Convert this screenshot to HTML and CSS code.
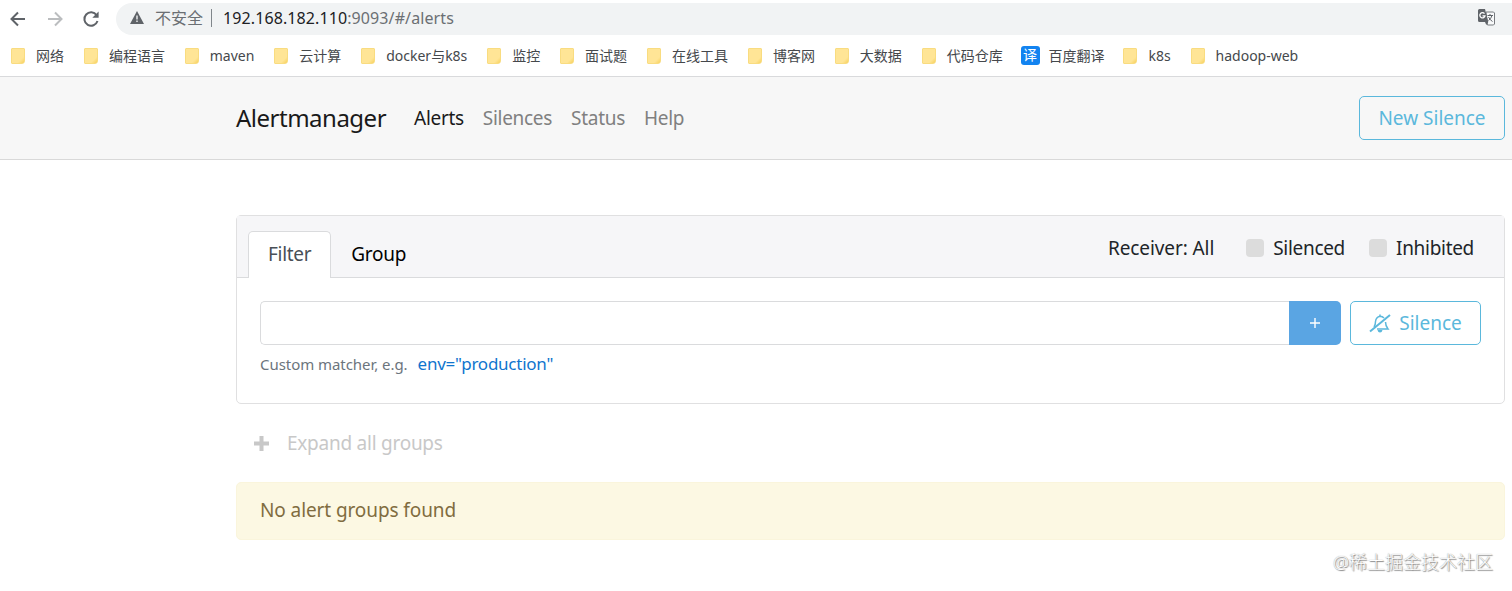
FILE: index.html
```
<!DOCTYPE html>
<html lang="en">
<head>
  <meta charset="UTF-8">
  <title>Alertmanager</title>
  <link rel="stylesheet" href="styles.css">
</head>
<body>

<div class="toolbar">
  <svg class="tool-icon back" width="18" height="18" viewBox="0 0 18 18"><path d="M16 9H3M9 2.5L2.5 9L9 15.5"/></svg>
  <svg class="tool-icon forward" width="18" height="18" viewBox="0 0 18 18"><path d="M2 9h13M9 2.5L15.5 9L9 15.5"/></svg>
  <svg class="tool-icon reload" width="18" height="18" viewBox="0 0 18 18"><path d="M14.6 5.2A6.7 6.7 0 1 0 15.5 11"/><path class="solid" d="M16.6 1.5v6.3h-6.3z"/></svg>
  <div class="address">
    <svg class="warn" width="14" height="13" viewBox="0 0 14 13"><path fill="#5f6368" d="M7 0l7 13H0z"/><path fill="#f1f3f4" d="M6.3 4.5h1.4v4H6.3zM6.3 9.6h1.4V11H6.3z"/></svg>
    <span class="unsafe">不安全</span>
    <span class="divider"></span>
    <span class="url"><b>192.168.182.110</b>:9093/#/alerts</span>
    <svg class="translate" width="17" height="17" viewBox="0 0 17 17">
      <path fill="#f8f9fa" stroke="#777a7e" d="M8 3h7.5l1 1v11l-1 1H9.5z"/>
      <path fill="#5f6368" d="M1.5 0H7l3.3 13H1.5Q0 13 0 11.5V1.5Q0 0 1.5 0zM7 13h3.3l-2 3z"/>
      <path fill="none" stroke="#fff" stroke-width="1.3" d="M6.5 4.6A2.6 2.6 0 1 0 7 6.8H4.5"/>
      <path fill="none" stroke="#5f6368" d="M9.5 6.5H15M12 5v1.5M14 6.5Q13 10 10.5 11.5M10.5 8Q12 11 14.5 12.5"/>
    </svg>
  </div>
</div>

<div class="bookmarks">
  <span class="bookmark"><i class="folder"></i>网络</span>
  <span class="bookmark"><i class="folder"></i>编程语言</span>
  <span class="bookmark"><i class="folder"></i>maven</span>
  <span class="bookmark"><i class="folder"></i>云计算</span>
  <span class="bookmark"><i class="folder"></i>docker与k8s</span>
  <span class="bookmark"><i class="folder"></i>监控</span>
  <span class="bookmark"><i class="folder"></i>面试题</span>
  <span class="bookmark"><i class="folder"></i>在线工具</span>
  <span class="bookmark"><i class="folder"></i>博客网</span>
  <span class="bookmark"><i class="folder"></i>大数据</span>
  <span class="bookmark"><i class="folder"></i>代码仓库</span>
  <span class="bookmark site"><i class="fanyi">译</i>百度翻译</span>
  <span class="bookmark"><i class="folder"></i>k8s</span>
  <span class="bookmark"><i class="folder"></i>hadoop-web</span>
</div>

<header class="navbar">
  <a class="brand">Alertmanager</a>
  <nav>
    <a class="active">Alerts</a>
    <a>Silences</a>
    <a>Status</a>
    <a>Help</a>
  </nav>
  <button class="btn new-silence">New Silence</button>
</header>

<main class="container">
  <div class="card">
    <div class="card-header">
      <div class="tabs">
        <a class="tab active">Filter</a>
        <a class="tab">Group</a>
      </div>
      <div class="options">
        <span class="receiver">Receiver: All</span>
        <label><i class="check"></i>Silenced</label>
        <label><i class="check"></i>Inhibited</label>
      </div>
    </div>
    <div class="card-body">
      <div class="filter-row">
        <input type="text" class="matcher">
        <button class="add"><svg width="10" height="10" viewBox="0 0 10 10"><path stroke="#fff" stroke-width="1.4" d="M5 0v10M0 5h10"/></svg></button>
        <button class="btn silence">
          <svg width="22" height="20" viewBox="0 0 22 20"><path d="M5 14Q6.5 12 6.5 8.500Q7 4 11 3.200Q13.500 3.200 15 5M16.500 9Q16.500 13 19 16H8M11 3V1.500"/><path class="slash" d="M1 18.500L21 2"/><path class="clapper" d="M8.500 17h5Q13 19.500 11 19.500T8.500 17z"/></svg>
          Silence
        </button>
      </div>
      <div class="hint"><span>Custom matcher, e.g.</span><a>env="production"</a></div>
    </div>
  </div>

  <div class="expand">
    <svg width="15" height="15" viewBox="0 0 15 15"><path stroke="#c8c8c8" stroke-width="4" d="M7.5 0v15M0 7.5h15"/></svg>
    <span>Expand all groups</span>
  </div>

  <div class="alert">No alert groups found</div>
</main>

<div class="watermark">@稀土掘金技术社区</div>

</body>
</html>
```

FILE: styles.css
```
* {
  box-sizing: border-box;
}

body {
  font-family: "Noto Sans", "Noto Sans CJK SC", sans-serif;
  font-size: 19px;
  line-height: 28px;
  margin: 0;
  color: #212529;
  background: #fff;
  overflow: hidden;
}

/* browser bars */
.toolbar {
  height: 37px;
  padding: 3px 0 3px 9px;
  display: flex;
  align-items: center;
}

.tool-icon {
  margin-right: 19px;
  fill: none;
  stroke: #5f6368;
  stroke-width: 2;
}

.tool-icon.forward {
  margin-right: 18px;
  stroke: #bbbdbf;
}

.tool-icon.reload {
  margin-right: 16px;
}

.solid {
  fill: #5f6368;
  stroke: none;
}

.address {
  flex: 1;
  height: 32px;
  padding: 0 17px 2px 14px;
  display: flex;
  align-items: center;
  background: #f1f3f4;
  border-radius: 16px 0 0 16px;
  color: #6b6f73;
  font-size: 16px;
}

.unsafe {
  margin-left: 11px;
}

.divider {
  width: 1px;
  height: 18px;
  margin: 0 11px 0 8px;
  background: #80868b;
}

.url {
  letter-spacing: 0.1px;
}

.url b {
  font-weight: normal;
  color: #202124;
}

.translate {
  margin-left: auto;
}

.bookmarks {
  height: 40px;
  padding: 0 0 2px 11px;
  display: flex;
  align-items: center;
  gap: 19.9px;
  border-bottom: 1px solid #d9dadc;
  font-size: 14px;
  color: #45484c;
  white-space: nowrap;
}

.bookmark {
  display: flex;
  align-items: center;
  gap: 11px;
}

.folder {
  width: 14px;
  height: 16px;
  background: linear-gradient(135deg, #ffe596 75%, #f7d15c);
  border: 1px solid #f9dc80;
  border-radius: 1px 1px 3px 1px;
}

.bookmark.site {
  gap: 9px;
  margin: 0 -1px 0 -2px;
}

.fanyi {
  width: 19px;
  height: 19px;
  background: #1283f0;
  border-radius: 3px;
  color: #fff;
  font-size: 14px;
  font-style: normal;
  line-height: 18px;
  text-align: center;
}

/* page */
.navbar {
  height: 83px;
  padding: 0 7px 0 236px;
  display: flex;
  align-items: center;
  background: #f7f7f7;
  border-bottom: 1px solid #d9d9d9;
}

.brand {
  font-size: 24px;
  letter-spacing: -0.5px;
  color: #1a1a1a;
}

nav {
  display: flex;
  gap: 19px;
  margin-left: 28px;
  letter-spacing: -0.3px;
  color: #808080;
}

nav .active {
  color: #1a1a1a;
}

.btn {
  height: 44px;
  border: 1px solid #5bb8dc;
  border-radius: 5px;
  background: transparent;
  color: #5bb8dc;
  font: inherit;
  padding: 0;
}

.new-silence {
  width: 146px;
  margin-left: auto;
}

.container {
  padding: 55px 7px 0 236px;
}

.card {
  height: 189px;
  border: 1px solid #e0e0e1;
  border-radius: 5px;
}

.card-header {
  height: 62px;
  padding: 15px 30px 0 11px;
  display: flex;
  justify-content: space-between;
  background: #f6f6f8;
  border-bottom: 1px solid #dadbdd;
  letter-spacing: -0.3px;
}

.tabs {
  display: flex;
}

.tab {
  height: 47px;
  padding: 8px 19px 0;
  border: 1px solid transparent;
  border-bottom: 0;
  border-radius: 5px 5px 0 0;
  color: #000;
}

.tab.active {
  background: #fff;
  border-color: #dadbdd;
  color: #495057;
}

.options {
  display: flex;
  padding-top: 3px;
}

.options label {
  display: flex;
  align-items: center;
  height: 28px;
}

.receiver {
  margin-right: 32px;
  letter-spacing: -0.1px;
}

.options label + label {
  margin-left: 24px;
}

.check {
  width: 18px;
  height: 18px;
  margin-right: 9px;
  background: #dcdcdc;
  border-radius: 4px;
}

.card-body {
  padding: 23px;
}

.filter-row {
  display: flex;
}

.matcher {
  flex: 1;
  height: 44px;
  border: 1px solid #dadbdd;
  border-right: 0;
  border-radius: 5px 0 0 5px;
}

.add {
  width: 52px;
  height: 44px;
  padding: 0;
  border: 0;
  border-radius: 0 5px 5px 0;
  background: #5aa5e3;
}

.silence {
  width: 131px;
  margin-left: 9px;
  display: flex;
  align-items: center;
  justify-content: center;
  gap: 8px;
}

.silence svg {
  fill: none;
  stroke: #5bb8dc;
  stroke-width: 1.5;
}

.silence .slash {
  stroke-width: 2;
}

.silence .clapper {
  fill: #5bb8dc;
  stroke: none;
}

.hint {
  display: flex;
  gap: 10px;
  margin-top: 5px;
  font-size: 15px;
  letter-spacing: -0.05px;
  color: #6c757d;
}

.hint a {
  font-size: 17px;
  letter-spacing: -0.25px;
  color: #0f75ce;
}

.expand {
  display: flex;
  align-items: center;
  gap: 18px;
  margin: 25px 0 25px 18px;
  letter-spacing: -0.25px;
  color: #c8c8c8;
}

.alert {
  height: 58px;
  padding: 13px 23px;
  background: #fcf8e3;
  border: 1px solid #faf5dc;
  border-radius: 5px;
  letter-spacing: -0.1px;
  color: #806c40;
}

.watermark {
  padding: 8px 19px 0 0;
  text-align: right;
  font-size: 18px;
  font-weight: 300;
  color: #fff;
  text-shadow: 0 0 1px #888, 1px 1px 1px #888;
}
```
